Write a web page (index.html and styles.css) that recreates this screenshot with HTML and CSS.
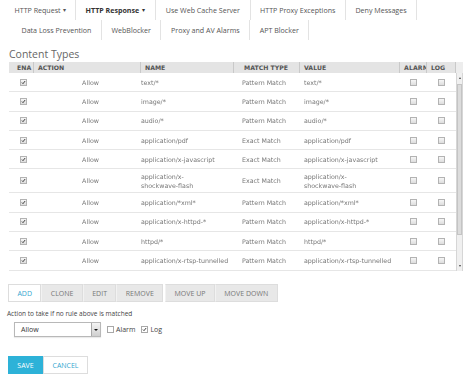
FILE: index.html
```html
<!DOCTYPE html>
<html lang="en">
<head>
    <meta charset="UTF-8">
    <title>Content Types</title>
    <link rel="stylesheet" href="styles.css">
</head>
<body>
    <div class="tabs">
        <div class="tab-row first">
            <span class="tab">HTTP Request <span class="caret">&#9662;</span></span>
            <span class="tab active">HTTP Response <span class="caret">&#9662;</span></span>
            <span class="tab">Use Web Cache Server</span>
            <span class="tab">HTTP Proxy Exceptions</span>
            <span class="tab">Deny Messages</span>
        </div>
        <div class="tab-row second">
            <span class="tab">Data Loss Prevention</span>
            <span class="tab">WebBlocker</span>
            <span class="tab">Proxy and AV Alarms</span>
            <span class="tab">APT Blocker</span>
        </div>
    </div>

    <h1 class="page-title">Content Types</h1>

    <div class="grid">
        <div class="grid-head">
            <div class="cols head-cols">
                <span class="hc hc-ena">Ena</span>
                <span class="hc">Action</span>
                <span class="hc">Name</span>
                <span class="hc hc-match">Match Type</span>
                <span class="hc">Value</span>
                <span class="hc hc-small">Alarm</span>
                <span class="hc">Log</span>
            </div>
            <span class="head-spacer"></span>
        </div>
        <div class="grid-body">
            <div class="rows" id="rows"></div>
            <div class="scrollbar">
                <span class="sb-btn"><span class="arrow-up"></span></span>
                <span class="sb-thumb"></span>
                <span class="sb-track"></span>
                <span class="sb-btn"><span class="arrow-down"></span></span>
            </div>
        </div>
    </div>

    <div class="toolbar">
        <div class="btn-group">
            <button class="btn active">Add</button>
            <button class="btn">Clone</button>
            <button class="btn">Edit</button>
            <button class="btn">Remove</button>
        </div>
        <div class="btn-group">
            <button class="btn">Move Up</button>
            <button class="btn">Move Down</button>
        </div>
    </div>

    <div class="default-action">
        <div class="field-label">Action to take if no rule above is matched</div>
        <div class="field-row">
            <div class="select">
                <span class="select-value">Allow</span>
                <span class="select-btn"><span class="arrow-down dark"></span></span>
            </div>
            <label class="check-label"><span class="box"></span>Alarm</label>
            <label class="check-label"><span class="box checked"><svg viewBox="0 0 7 7"><path d="M1.3 3.6 L2.8 5.1 L5.8 1.4" /></svg></span>Log</label>
        </div>
    </div>

    <div class="actions">
        <button class="btn-save">Save</button>
        <button class="btn-cancel">Cancel</button>
    </div>

    <script>
        const rules = [
            ['text/*', 'Pattern Match', 'text/*'],
            ['image/*', 'Pattern Match', 'image/*'],
            ['audio/*', 'Pattern Match', 'audio/*'],
            ['application/pdf', 'Exact Match', 'application/pdf'],
            ['application/x-javascript', 'Exact Match', 'application/x-javascript'],
            ['application/x-<br>shockwave-flash', 'Exact Match', 'application/x-<br>shockwave-flash'],
            ['application/*xml*', 'Pattern Match', 'application/*xml*'],
            ['application/x-httpd-*', 'Pattern Match', 'application/x-httpd-*'],
            ['httpd/*', 'Pattern Match', 'httpd/*'],
            ['application/x-rtsp-tunnelled', 'Pattern Match', 'application/x-rtsp-tunnelled']
        ];

        const check = '<svg viewBox="0 0 7 7"><path d="M1.3 3.6 L2.8 5.1 L5.8 1.4" /></svg>';
        const rows = document.getElementById('rows');

        rules.forEach(rule => {
            const row = document.createElement('div');
            row.className = 'cols row' + (rule[0].includes('<br>') ? ' tall' : '');
            row.innerHTML =
                '<span class="c-ena"><span class="box checked">' + check + '</span></span>' +
                '<span class="c-action">Allow</span>' +
                '<span class="c-name">' + rule[0] + '</span>' +
                '<span class="c-match">' + rule[1] + '</span>' +
                '<span class="c-value">' + rule[2] + '</span>' +
                '<span class="c-box"><span class="box"></span></span>' +
                '<span class="c-box"><span class="box"></span></span>';
            rows.appendChild(row);
        });
    </script>
</body>
</html>
```

FILE: styles.css
```css
* {
    box-sizing: border-box;
}

body {
    margin: 0;
    background-color: #ffffff;
    font-family: "Open Sans", sans-serif;
    color: #555555;
}

/* tabs */
.tab-row {
    display: flex;
    height: 20px;
}

.tab-row.first {
    padding-left: 5px;
}

.tab-row.second {
    padding-left: 12px;
}

.tab {
    display: flex;
    align-items: center;
    padding: 0 9.5px;
    border-right: 1px solid #e3e3e3;
    font-size: 7.1px;
    color: #555555;
    white-space: nowrap;
}

.tab.active {
    padding-right: 10px;
    font-weight: 700;
    color: #333333;
}

.caret {
    margin-left: 2px;
    font-size: 6px;
}

.tab.active .caret {
    margin-left: 3px;
    font-weight: 400;
}

.page-title {
    margin: 7px 0 1px 9px;
    font-size: 10.5px;
    font-weight: 400;
    line-height: 14px;
    color: #666666;
}

/* grid */
.grid {
    margin-left: 9px;
    width: 455px;
}

.cols {
    display: grid;
    grid-template-columns: 25px 107px 93px 66px 100px 27px 29px;
}

.grid-head {
    display: flex;
    height: 11px;
    margin-top: 1px;
}

.head-cols {
    width: 447px;
    background-color: #e4e4e4;
}

.head-spacer {
    width: 7px;
    background-color: #ededed;
}

.hc {
    padding-left: 4px;
    border-right: 1px solid #c9c9c9;
    font-family: "DejaVu Sans", sans-serif;
    font-size: 6.2px;
    font-weight: 700;
    line-height: 11px;
    text-transform: uppercase;
    color: #555555;
    overflow: hidden;
    white-space: nowrap;
}

.hc-ena {
    padding-left: 8px;
}

.hc-match {
    padding-left: 10px;
}

.hc-small {
    padding-left: 4px;
    letter-spacing: 0.1px;
}

.grid-body {
    display: flex;
}

.rows {
    width: 447px;
    will-change: transform;
}

.row {
    height: 19.3px;
    align-items: center;
    border-bottom: 1px solid #e6e6e6;
    font-family: "DejaVu Sans", sans-serif;
    font-size: 6.3px;
    line-height: 9px;
    color: #777777;
}

.row.tall {
    height: 24px;
}

.c-ena {
    display: flex;
    padding-left: 11px;
}

.c-action {
    padding-left: 6px;
    text-align: center;
}

.c-name {
    padding-left: 0;
}

.c-match {
    padding-left: 8px;
}

.c-value {
    padding-left: 4px;
}

.c-box {
    display: flex;
    justify-content: center;
}

.box {
    display: inline-block;
    width: 7px;
    height: 7px;
    border: 1px solid #b3b3b3;
    background: linear-gradient(#f6f6f6, #dddddd);
}

.box svg {
    display: block;
    width: 5px;
    height: 5px;
}

.box svg path {
    fill: none;
    stroke: #222222;
    stroke-width: 1.2;
}

/* fake scroll bar */
.scrollbar {
    display: flex;
    flex-direction: column;
    width: 7px;
    height: 198px;
    background-color: #f0f0f0;
    border-left: 1px solid #d6d6d6;
    border-right: 1px solid #d6d6d6;
}

.sb-btn {
    display: flex;
    justify-content: center;
    align-items: center;
    height: 10px;
}

.sb-thumb {
    height: 151px;
    margin-top: 1px;
    background-color: #dcdcdc;
    border: 1px solid #c4c4c4;
}

.sb-track {
    flex: 1;
}

.arrow-up,
.arrow-down {
    width: 0;
    height: 0;
    border-left: 1.5px solid transparent;
    border-right: 1.5px solid transparent;
}

.arrow-up {
    border-bottom: 2px solid #444444;
}

.arrow-down {
    border-top: 2px solid #444444;
}

/* toolbar */
.toolbar {
    display: flex;
    gap: 2px;
    margin: 13px 0 0 8px;
}

.btn-group {
    display: flex;
}

.btn {
    height: 18px;
    padding: 0 8.4px;
    border: 1px solid #dddddd;
    border-left-color: #f2f2f2;
    background-color: #e8e8e8;
    font-family: "Open Sans", sans-serif;
    font-size: 7px;
    text-transform: uppercase;
    color: #777777;
}

.btn.active {
    background-color: #ffffff;
    border-left-color: #dddddd;
    color: #34a6cf;
}

.default-action {
    margin-top: 8px;
}

.field-label {
    margin-left: 7px;
    font-size: 6.5px;
    line-height: 8px;
    color: #444444;
}

.field-row {
    display: flex;
    align-items: center;
    gap: 6px;
    margin: 4px 0 0 14px;
}

.select {
    display: flex;
    width: 87px;
    height: 15px;
    border: 1px solid #b8b8b8;
    background-color: #ffffff;
    box-shadow: 0 1px 1px rgba(0, 0, 0, 0.08);
}

.select-value {
    flex: 1;
    padding-left: 6px;
    font-size: 7px;
    line-height: 13px;
    color: #333333;
}

.select-btn {
    display: flex;
    justify-content: center;
    align-items: center;
    width: 9px;
    border-left: 1px solid #a9a9a9;
    background: linear-gradient(#f4f4f4, #cfcfcf);
}

.arrow-down.dark {
    border-left-width: 2px;
    border-right-width: 2px;
    border-top: 2.5px solid #111111;
}

.check-label {
    display: flex;
    align-items: center;
    gap: 2px;
    font-size: 7px;
    color: #444444;
}

.check-label .box {
    background: #ffffff;
    border-color: #a8a8a8;
}

/* save bar */
.actions {
    display: flex;
    margin: 19px 0 0 8px;
}

.btn-save,
.btn-cancel {
    height: 18px;
    font-family: "Open Sans", sans-serif;
    font-size: 7px;
    text-transform: uppercase;
    border: 1px solid #dddddd;
}

.btn-save {
    width: 35px;
    background-color: #2db2d8;
    border-color: #2db2d8;
    color: #ffffff;
}

.btn-cancel {
    width: 45px;
    background-color: #ffffff;
    color: #34a6cf;
}
```
